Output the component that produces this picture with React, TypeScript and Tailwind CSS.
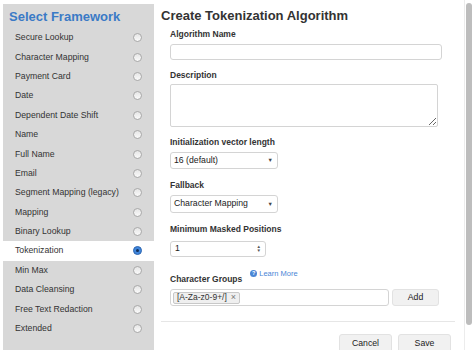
import React from 'react';

const frameworks = [
  'Secure Lookup', 'Character Mapping', 'Payment Card', 'Date', 'Dependent Date Shift',
  'Name', 'Full Name', 'Email', 'Segment Mapping (legacy)', 'Mapping', 'Binary Lookup',
  'Tokenization', 'Min Max', 'Data Cleansing', 'Free Text Redaction', 'Extended',
];

function Radio({ checked }: { checked: boolean }) {
  if (checked) {
    return (
      <span className="flex h-[9px] w-[9px] items-center justify-center rounded-full bg-[#3f86dc] border border-[#2f66b0]">
        <span className="h-[3px] w-[3px] rounded-full bg-[#14305a]" />
      </span>
    );
  }
  return <span className="h-[9px] w-[9px] rounded-full border border-[#a9a9a9] bg-gradient-to-b from-[#e6e6e6] to-[#fafafa]" />;
}

function Label({ children, className = '' }: { children: React.ReactNode; className?: string }) {
  return <div className={`text-[8.5px] leading-[12px] font-bold text-[#333] ${className}`}>{children}</div>;
}

export default function App() {
  const selected = 'Tokenization';
  return (
    <div className="flex h-[350px] w-[474px] overflow-hidden bg-white font-['Liberation_Sans',Arial,sans-serif]">
      <div className="ml-[3px] mt-[4px] w-[151px] shrink-0 bg-[#d8d8d8]">
        <div className="pl-[6px] pt-[4px] h-[24px] text-[13px] leading-[18px] font-bold text-[#3a7ac6]">Select Framework</div>
        {frameworks.map((f) => (
          <div key={f} className={`flex h-[19.4px] items-center justify-between pl-[12px] pr-[12px] ${f === selected ? 'bg-white' : ''}`}>
            <span className="text-[8.7px] text-[#333]">{f}</span>
            <Radio checked={f === selected} />
          </div>
        ))}
      </div>

      <div className="ml-[7px] flex w-[303px] shrink-0 flex-col">
        <div className="pt-[7px] h-[24px] text-[13px] leading-[18px] font-bold text-[#333]">Create Tokenization Algorithm</div>
        <div className="pl-[9px] flex flex-col">
          <Label className="mt-[4px]">Algorithm Name</Label>
          <input className="mt-[4px] h-[16px] w-[272px] rounded-[3px] border border-[#d4d4d4] bg-white outline-none" />
          <Label className="mt-[9px]">Description</Label>
          <textarea className="mt-[3px] h-[43px] w-[268px] rounded-[2px] border border-[#d4d4d4] bg-white outline-none" />
          <Label className="mt-[9px]">Initialization vector length</Label>
          <div className="mt-[4px] flex h-[17px] w-[108px] items-center justify-between rounded-[3px] border border-[#d4d4d4] bg-white pl-[3px] pr-[4px] text-[8.7px] text-[#222]">
            <span>16 (default)</span>
            <span className="text-[5.5px] text-[#444]">▼</span>
          </div>
          <Label className="mt-[10px]">Fallback</Label>
          <div className="mt-[4px] flex h-[18px] w-[108px] items-center justify-between rounded-[3px] border border-[#d4d4d4] bg-white pl-[3px] pr-[4px] text-[8.7px] text-[#222]">
            <span>Character Mapping</span>
            <span className="text-[5.5px] text-[#444]">▼</span>
          </div>
          <Label className="mt-[10px]">Minimum Masked Positions</Label>
          <div className="mt-[6px] flex h-[16px] w-[96px] items-center justify-between rounded-[3px] border border-[#d4d4d4] bg-white pl-[4px] pr-[4px] text-[8.7px] text-[#222]">
            <span>1</span>
            <span className="flex flex-col items-center text-[4.5px] leading-[4.5px] text-[#555]">
              <span>▲</span>
              <span>▼</span>
            </span>
          </div>
          <div className="mt-[11px] flex items-start">
            <Label className="mt-[5px]">Character Groups</Label>
            <span className="ml-[8px] flex items-center gap-[2px] text-[7.5px] text-[#4a86d6]">
              <span className="flex h-[7px] w-[7px] items-center justify-center rounded-full bg-[#4a86d6] text-[5.5px] font-bold leading-none text-white">?</span>
              Learn More
            </span>
          </div>
          <div className="mt-[4px] flex items-center">
            <div className="flex h-[17px] w-[219px] items-center rounded-[3px] border border-[#d4d4d4] bg-white pl-[2px]">
              <span className="flex h-[12px] items-center gap-[4px] rounded-[2px] border border-[#c8c8c8] bg-[#efefef] px-[3px] text-[8.5px] text-[#333]">
                [A-Za-z0-9+/]
                <span className="text-[9px] text-[#777]">×</span>
              </span>
            </div>
            <button className="ml-[3px] h-[17px] w-[47px] rounded-[3px] border border-[#e2e2e2] bg-[#f1f1f1] text-[8.7px] text-[#222]">Add</button>
          </div>
        </div>
        <div className="mt-[15px] w-[294px] border-t border-[#e6e6e6]" />
        <div className="mt-[12px] flex w-[290px] justify-end gap-[6px]">
          <button className="h-[19px] w-[53px] rounded-[3px] border border-[#e2e2e2] bg-[#f1f1f1] text-[8.7px] text-[#222]">Cancel</button>
          <button className="h-[19px] w-[53px] rounded-[3px] border border-[#e2e2e2] bg-[#f1f1f1] text-[8.7px] text-[#222]">Save</button>
        </div>
      </div>

      <div className="flex h-full w-[10px] shrink-0 border-l border-[#ececec] pl-[1px] pt-[3px]">
        <div className="h-[322px] w-[6px] rounded-[3px] bg-[#bdbdbd]" />
      </div>
    </div>
  );
}
